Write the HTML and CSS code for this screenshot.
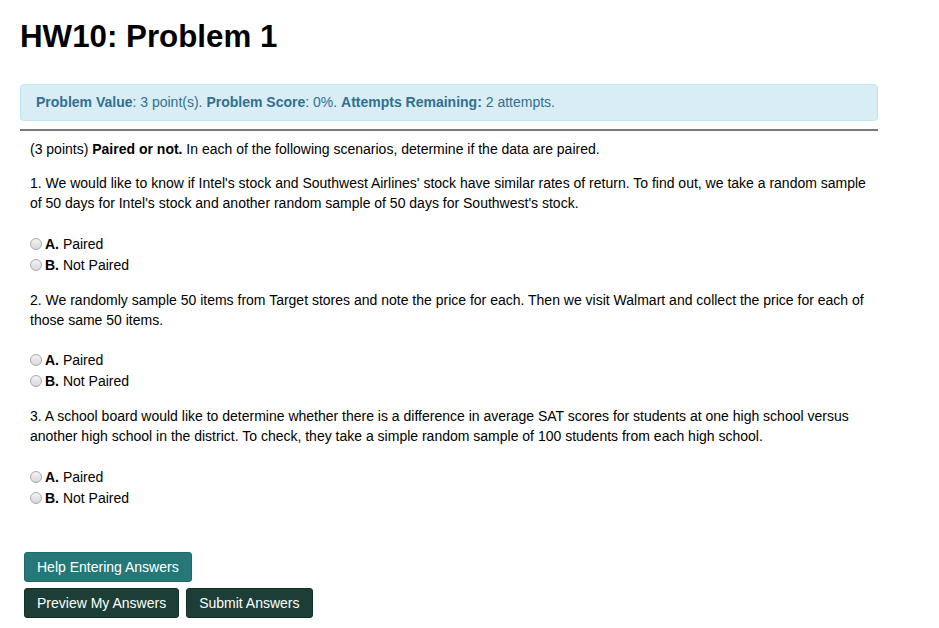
FILE: index.html
```html
<!DOCTYPE html>
<html>
<head>
<meta charset="utf-8">
<link rel="stylesheet" href="styles.css">
</head>
<body>
<div class="page">
  <h1 class="title">HW10: Problem 1</h1>
  <div class="alert"><b>Problem Value</b>: 3 point(s). <b>Problem Score</b>: 0%. <b>Attempts Remaining:</b> 2 attempts.</div>
  <div class="rule"></div>
  <div class="problem">
    <p class="intro">(3 points) <b>Paired or not.</b> In each of the following scenarios, determine if the data are paired.</p>
    <p class="q">1. We would like to know if Intel's stock and Southwest Airlines' stock have similar rates of return. To find out, we take a random sample of 50 days for Intel's stock and another random sample of 50 days for Southwest's stock.</p>
    <div class="opts">
      <label class="opt"><span class="radio"></span><b>A.</b>&nbsp;Paired</label>
      <label class="opt"><span class="radio"></span><b>B.</b>&nbsp;Not Paired</label>
    </div>
    <p class="q">2. We randomly sample 50 items from Target stores and note the price for each. Then we visit Walmart and collect the price for each of those same 50 items.</p>
    <div class="opts">
      <label class="opt"><span class="radio"></span><b>A.</b>&nbsp;Paired</label>
      <label class="opt"><span class="radio"></span><b>B.</b>&nbsp;Not Paired</label>
    </div>
    <p class="q">3. A school board would like to determine whether there is a difference in average SAT scores for students at one high school versus another high school in the district. To check, they take a simple random sample of 100 students from each high school.</p>
    <div class="opts">
      <label class="opt"><span class="radio"></span><b>A.</b>&nbsp;Paired</label>
      <label class="opt"><span class="radio"></span><b>B.</b>&nbsp;Not Paired</label>
    </div>
  </div>
  <div class="buttons">
    <div class="row"><span class="btn btn-help">Help Entering Answers</span></div>
    <div class="row"><span class="btn btn-dark">Preview My Answers</span><span class="btn btn-dark">Submit Answers</span></div>
  </div>
</div>
</body>
</html>
```
FILE: styles.css
```css
html, body {
  margin: 0;
  padding: 0;
  background: #fff;
}
body {
  font-family: "Liberation Sans", Arial, sans-serif;
  font-size: 14px;
  line-height: 20px;
  color: #000;
}
.page {
  padding: 0 0 0 20px;
  width: 858px;
}
.title {
  margin: 0;
  padding-top: 17px;
  font-size: 31.3px;
  line-height: 40px;
  font-weight: bold;
}
.alert {
  margin-top: 27px;
  height: 35px;
  box-sizing: content-box;
  border: 1px solid #bce8f1;
  border-radius: 4px;
  background: #d9edf7;
  color: #31708f;
  font-size: 14px;
  line-height: 35px;
  padding: 0 15px;
  white-space: nowrap;
}
.rule {
  margin-top: 8px;
  height: 0;
  border-top: 2px solid #7a7a7a;
}
.problem {
  padding: 8px 10px 0 10px;
}
.problem p {
  margin: 0;
}
.q {
  margin-top: 14px !important;
}
.opts {
  margin-top: 20px;
  margin-bottom: 14.5px;
  display: flex;
  flex-direction: column;
}
.opt {
  display: flex;
  align-items: center;
  height: 21px;
}
.radio {
  width: 10px;
  height: 10px;
  border-radius: 50%;
  border: 1px solid #a9a9a9;
  background: linear-gradient(#f4f4f4, #d8d8d8);
  margin-right: 3px;
  flex: none;
}
.buttons {
  margin-top: 44px;
  padding-left: 4px;
  display: flex;
  flex-direction: column;
  gap: 6px;
}
.row {
  display: flex;
  gap: 7px;
}
.btn {
  display: inline-block;
  color: #fff;
  font-size: 14px;
  line-height: 20px;
  padding: 4px 12px 4px;
  border-radius: 3px;
  border: 1px solid transparent;
}
.btn-help {
  background: #267878;
  border-color: #1f6b6b;
}
.btn-dark {
  background: #1d3e36;
  border-color: #13302a;
}
```
